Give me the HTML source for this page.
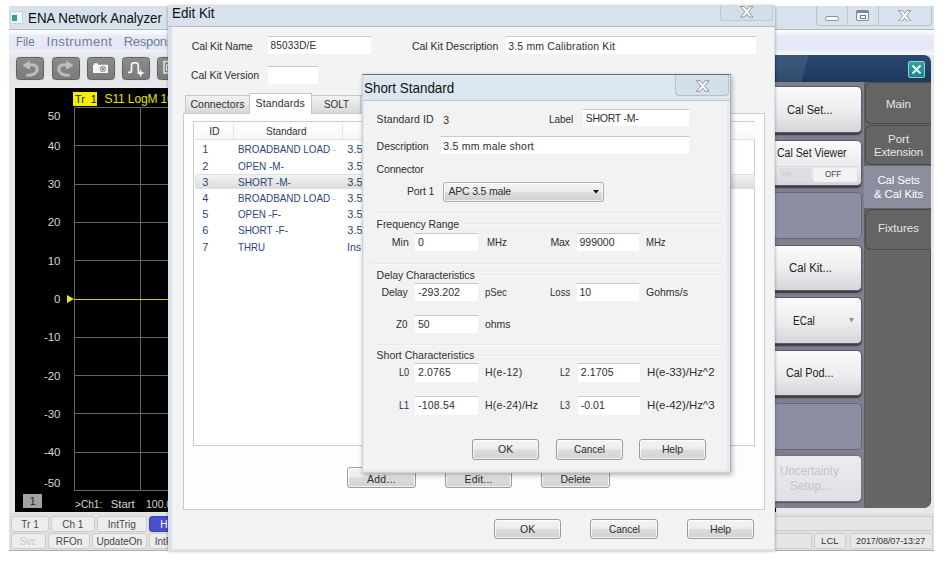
<!DOCTYPE html>
<html><head><meta charset="utf-8"><title>ENA Network Analyzer</title>
<style>
html,body{margin:0;padding:0;background:#fff;}
body{width:946px;height:561px;overflow:hidden;position:relative;font-family:"Liberation Sans",sans-serif;}
#root{position:absolute;left:0;top:0;width:946px;height:561px;overflow:hidden;background:#fff;}
#root div{position:absolute;box-sizing:border-box;}
.t{position:absolute;white-space:nowrap;font-family:"Liberation Sans",sans-serif;}
.inp{background:#fff;border:1px solid #f1f2f4;border-top-color:#c6c9ce;}
.btn{background:linear-gradient(#f4f4f4 0%,#ececec 48%,#dddddd 52%,#d2d2d2 100%);border:1px solid #9a9b9c;border-radius:3px;box-shadow:inset 0 0 0 1px rgba(255,255,255,.75);}
.sk{background:linear-gradient(#fbfbfb 0%,#ececee 55%,#d6d6da 100%);border:1px solid #5c5c66;border-radius:5px;box-shadow:0 1.500px 1.500px rgba(0,0,0,.55);}
.sk0{background:#8e8ea3;border:1px solid #666678;border-radius:5px;}
.tb{background:linear-gradient(#8b8b8b,#7b7b7b);border:1px solid #646464;border-radius:3.500px;box-shadow:0 0 1px rgba(0,0,0,.3);}
.st{background:#ededed;border:1px solid #cccccc;border-radius:3px;}
.skd{background:linear-gradient(#ececf0,#dfdfe5);border:1px solid #74747f;border-radius:5px;box-shadow:0 1px 1px rgba(0,0,0,.35);}
.vtab{background:#646464;border:1px solid #4a4a4a;border-radius:6px 0 0 6px;border-right:none;}
</style></head><body><div id="root">
<div style="left:9.3px;top:6px;width:924.7px;height:544.8px;background:#e6e8ec;"></div>
<div style="left:9.3px;top:6px;width:924.7px;height:23px;background:#d7e2ed;"></div>
<div style="left:9.3px;top:28.5px;width:924.7px;height:1px;background:#b3bac3;"></div>
<div style="left:10px;top:11px;width:13px;height:13px;background:#eef6f8;border:1px solid #c3d3d8;"></div>
<div style="left:11.5px;top:14.8px;width:5px;height:6.2px;background:#3f9a94;"></div>
<span class="t" style="left:28.4px;top:8.6px;font-size:14px;line-height:18px;color:#111;transform:scaleX(0.951);transform-origin:0 50%;">ENA Network Analyzer</span>
<div style="left:816px;top:6px;width:116px;height:20px;border:1px solid #b9c3ce;border-top:none;border-radius:0 0 4px 4px;background:#d7e2ed;"></div>
<div style="left:846.5px;top:6px;width:1px;height:20px;background:#bcc6d1;"></div>
<div style="left:878px;top:6px;width:1px;height:20px;background:#bcc6d1;"></div>
<div style="left:825px;top:16px;width:14px;height:5px;background:#fff;border:1px solid #8a93a0;border-radius:2px;"></div>
<div style="left:855.8px;top:9.5px;width:13px;height:11.5px;border:1.500px solid #7d8794;border-top-width:3px;border-radius:2px;background:#f4f7fa;"></div>
<div style="left:859.5px;top:14.5px;width:6.5px;height:4.8px;border:1.500px solid #6f7986;background:#fff;"></div>
<svg style="position:absolute;left:898px;top:9.5px" width="13.5" height="11.5" viewBox="0 0 14 12"><path d="M.500 .500h4l2.500 3.200 2.500-3.200h4l-4.500 5.500 4.500 5.500h-4l-2.500-3.200-2.500 3.200h-4l4.500-5.500z" fill="#fdfdfe" stroke="#858f9c" stroke-width="1"/></svg>
<div style="left:9.3px;top:29.5px;width:924.7px;height:25.5px;background:linear-gradient(#fcfdfe 0%,#f6f7fc 13%,#e8ebf8 22%,#e3e7f6 72%,#eceff9 82%,#f7f8fc 100%);"></div>
<span class="t" style="left:16.2px;top:32.5px;font-size:13px;line-height:17px;color:#717d94;transform:scaleX(0.888);transform-origin:0 50%;">File</span>
<span class="t" style="left:46.6px;top:32.5px;font-size:13px;line-height:17px;color:#717d94;letter-spacing:0.43px;">Instrument</span>
<span class="t" style="left:123.7px;top:32.5px;font-size:13px;line-height:17px;color:#717d94;letter-spacing:-0.28px;">Response</span>
<div style="left:9.3px;top:51.5px;width:766.7px;height:35.5px;background:linear-gradient(#ecedf2,#e4e5ea 20%,#e6e7eb);"></div>
<div class="tb" style="left:16.4px;top:56.5px;width:28.1px;height:23.7px;"></div>
<div class="tb" style="left:51.5px;top:56.5px;width:28.1px;height:23.7px;"></div>
<div class="tb" style="left:86.6px;top:56.5px;width:28.1px;height:23.7px;"></div>
<div class="tb" style="left:121.7px;top:56.5px;width:28.1px;height:23.7px;"></div>
<div class="tb" style="left:156.8px;top:56.5px;width:28.1px;height:23.7px;"></div>
<svg style="position:absolute;left:16.200px;top:57px" width="29" height="23" viewBox="0 0 29 23"><path d="M6.500 8.200L13.800 3.500v9.400z" fill="#bdbdbd"/><path d="M12.500 8.200C19 6.500 22.500 10 20.800 13.800C19.300 17 15.500 18.300 11.500 18.200" fill="none" stroke="#bdbdbd" stroke-width="3" stroke-linecap="round"/></svg>
<svg style="position:absolute;left:51.100px;top:57px" width="29" height="23" viewBox="0 0 29 23"><path d="M22.500 8.200L15.200 3.500v9.400z" fill="#bdbdbd"/><path d="M16.500 8.200C10 6.500 6.500 10 8.200 13.800C9.700 17 13.500 18.300 17.500 18.200" fill="none" stroke="#bdbdbd" stroke-width="3" stroke-linecap="round"/></svg>
<svg style="position:absolute;left:86.200px;top:57px" width="29" height="23" viewBox="0 0 29 23"><path d="M7 7.800h1.300V6.200h3.700v1.600H22v8.200H7z" fill="#f6f6f6"/><circle cx="16.900" cy="12.100" r="3" fill="#8a8a8a"/><circle cx="16.900" cy="12.100" r="1.700" fill="none" stroke="#f6f6f6" stroke-width=".8"/></svg>
<svg style="position:absolute;left:121.300px;top:57px" width="29" height="23" viewBox="0 0 29 23"><path d="M7 15.400h2.200c1.300 0 1.300-1 1.300-2.500V8.800c0-2 .700-2.900 2.200-2.900h2.400c1.500 0 2.200.900 2.200 2.900v4.100c0 1.500 0 2.500 1 2.500" fill="none" stroke="#f6f6f6" stroke-width="1.700"/><path d="M19.600 12l1.100 3 3 1.100-3 1.100-1.100 3-1.100-3-3-1.100 3-1.100z" fill="#fff"/></svg>
<svg style="position:absolute;left:156.500px;top:57px" width="29" height="23" viewBox="0 0 29 23"><rect x="7" y="4.500" width="13" height="11.500" fill="none" stroke="#e8e8e8" stroke-width="1.400"/><rect x="9.500" y="8" width="5" height="5" fill="none" stroke="#e8e8e8" stroke-width="1.200"/></svg>
<div style="left:14.5px;top:87.7px;width:761.5px;height:424.7px;background:#000;"></div>
<div style="left:74px;top:107.1px;width:702px;height:1px;background:#666666;"></div>
<div style="left:74px;top:145.37px;width:702px;height:1px;background:#666666;"></div>
<div style="left:74px;top:183.64px;width:702px;height:1px;background:#666666;"></div>
<div style="left:74px;top:221.91px;width:702px;height:1px;background:#666666;"></div>
<div style="left:74px;top:260.18px;width:702px;height:1px;background:#666666;"></div>
<div style="left:74px;top:336.72px;width:702px;height:1px;background:#666666;"></div>
<div style="left:74px;top:374.99px;width:702px;height:1px;background:#666666;"></div>
<div style="left:74px;top:413.26px;width:702px;height:1px;background:#666666;"></div>
<div style="left:74px;top:451.53px;width:702px;height:1px;background:#666666;"></div>
<div style="left:74px;top:489.8px;width:702px;height:1px;background:#666666;"></div>
<div style="left:73.5px;top:107.6px;width:1px;height:382.7px;background:#666666;"></div>
<div style="left:140px;top:107.6px;width:1px;height:382.7px;background:#666666;"></div>
<div style="left:74px;top:298.75px;width:702px;height:0.95px;background:#d8c81e;"></div>
<svg style="position:absolute;left:66.500px;top:295.0px" width="8" height="8" viewBox="0 0 8 8"><path d="M0 0L7 4L0 8z" fill="#f2e21a"/></svg>
<span class="t" style="left:47.7px;top:108.6px;font-size:11.5px;line-height:15px;color:#d6d6d6;">50</span>
<span class="t" style="left:47.7px;top:138.9px;font-size:11.5px;line-height:15px;color:#d6d6d6;">40</span>
<span class="t" style="left:47.7px;top:177.1px;font-size:11.5px;line-height:15px;color:#d6d6d6;">30</span>
<span class="t" style="left:47.7px;top:215.4px;font-size:11.5px;line-height:15px;color:#d6d6d6;">20</span>
<span class="t" style="left:47.7px;top:253.7px;font-size:11.5px;line-height:15px;color:#d6d6d6;">10</span>
<span class="t" style="left:54.1px;top:292.0px;font-size:11.5px;line-height:15px;color:#d6d6d6;">0</span>
<span class="t" style="left:43.9px;top:330.2px;font-size:11.5px;line-height:15px;color:#d6d6d6;">-10</span>
<span class="t" style="left:43.9px;top:368.5px;font-size:11.5px;line-height:15px;color:#d6d6d6;">-20</span>
<span class="t" style="left:43.9px;top:406.8px;font-size:11.5px;line-height:15px;color:#d6d6d6;">-30</span>
<span class="t" style="left:43.9px;top:445.0px;font-size:11.5px;line-height:15px;color:#d6d6d6;">-40</span>
<span class="t" style="left:43.9px;top:475.6px;font-size:11.5px;line-height:15px;color:#d6d6d6;">-50</span>
<div style="left:73px;top:92px;width:24px;height:14px;background:#f4f000;"></div>
<span class="t" style="left:74.8px;top:91.8px;font-size:11.5px;line-height:15px;color:#222;transform:scaleX(0.930);transform-origin:0 50%;">Tr</span>
<span class="t" style="left:90.5px;top:91.8px;font-size:11.5px;line-height:15px;color:#222;">1</span>
<span class="t" style="left:104.6px;top:91.3px;font-size:12px;line-height:16px;color:#e6e000;letter-spacing:-0.13px;">S11 LogM 10.00dB/</span>
<div style="left:23px;top:494px;width:19.4px;height:14px;background:#a2a2a2;"></div>
<span class="t" style="left:29.5px;top:493.8px;font-size:11.5px;line-height:15px;color:#2c2c2c;">1</span>
<span class="t" style="left:75.0px;top:496.6px;font-size:11.5px;line-height:15px;color:#d4d4d4;transform:scaleX(0.877);transform-origin:0 50%;">&gt;Ch1:</span>
<span class="t" style="left:110.7px;top:496.6px;font-size:11.5px;line-height:15px;color:#d4d4d4;letter-spacing:-0.04px;">Start</span>
<span class="t" style="left:145.6px;top:496.6px;font-size:11.5px;line-height:15px;color:#d4d4d4;transform:scaleX(0.909);transform-origin:0 50%;">100.000</span>
<div style="left:9.3px;top:512.5px;width:924.7px;height:38.3px;background:#e1e1e1;"></div>
<div class="st" style="left:11px;top:516px;width:38px;height:15.5px;"></div>
<span class="t" style="left:21.3px;top:517.5px;font-size:10px;line-height:13px;color:#484848;">Tr 1</span>
<div class="st" style="left:51px;top:516px;width:43.5px;height:15.5px;"></div>
<span class="t" style="left:62.2px;top:517.5px;font-size:10px;line-height:13px;color:#484848;">Ch 1</span>
<div class="st" style="left:97px;top:516px;width:49.5px;height:15.5px;"></div>
<span class="t" style="left:107.8px;top:517.5px;font-size:10px;line-height:13px;color:#484848;">IntTrig</span>
<div style="left:149px;top:516px;width:51px;height:15.5px;background:#4a4fd0;border:1px solid #3a3fb0;border-radius:3px;"></div>
<span class="t" style="left:160.2px;top:517.5px;font-size:10px;line-height:13px;color:#fff;">Hold</span>
<div class="st" style="left:11px;top:533px;width:34.5px;height:15.5px;"></div>
<span class="t" style="left:19.7px;top:534.5px;font-size:10px;line-height:13px;color:#c8c8c8;">Svc</span>
<div class="st" style="left:48px;top:533px;width:42px;height:15.5px;"></div>
<span class="t" style="left:55.7px;top:534.5px;font-size:10px;line-height:13px;color:#484848;">RFOn</span>
<div class="st" style="left:92px;top:533px;width:54.5px;height:15.5px;"></div>
<span class="t" style="left:96.5px;top:534.5px;font-size:10px;line-height:13px;color:#484848;">UpdateOn</span>
<div class="st" style="left:149px;top:533px;width:51px;height:15.5px;"></div>
<span class="t" style="left:154.7px;top:534.5px;font-size:10px;line-height:13px;color:#484848;">IntRef</span>
<div style="left:770px;top:55px;width:161px;height:27px;background:linear-gradient(#294770 0%,#25416b 50%,#1e3659 100%);border-radius:0 7px 0 0;"></div>
<div style="left:776px;top:55px;width:54px;height:27px;background:linear-gradient(105deg,rgba(255,255,255,.09) 0,rgba(255,255,255,.09) 31px,rgba(255,255,255,0) 32px);"></div>
<div style="left:908px;top:61px;width:17px;height:16.5px;background:linear-gradient(#2fa0a0,#1d8288);border:1px solid #8fd2d2;border-radius:2px;"></div>
<svg style="position:absolute;left:911px;top:64px" width="11" height="11" viewBox="0 0 11 11"><path d="M1.500 1.500L9.500 9.500M9.500 1.500L1.500 9.500" stroke="#e2ffff" stroke-width="2"/></svg>
<div style="left:770px;top:82px;width:96px;height:426px;background:#7f7f8d;"></div>
<div style="left:864.3px;top:82px;width:66.7px;height:426px;background:#666666;border-radius:0 0 7px 0;border-right:1.500px solid #515151;"></div>
<div style="left:863.8px;top:82px;width:1px;height:426px;background:#5c5c66;"></div>
<div class="sk" style="left:760px;top:86.3px;width:101.5px;height:47px;"></div>
<div class="sk" style="left:760px;top:139.5px;width:101.5px;height:46.7px;"></div>
<div class="sk0" style="left:760px;top:192.3px;width:101.5px;height:46.5px;"></div>
<div class="sk" style="left:760px;top:244.8px;width:101.5px;height:46.7px;"></div>
<div class="sk" style="left:760px;top:297.3px;width:101.5px;height:46.7px;"></div>
<div class="sk" style="left:760px;top:349.8px;width:101.5px;height:46.2px;"></div>
<div class="sk0" style="left:760px;top:402.5px;width:101.5px;height:47.5px;"></div>
<div class="skd" style="left:760px;top:454.8px;width:101.5px;height:47.4px;"></div>
<span class="t" style="left:786.5px;top:102.0px;font-size:12.5px;line-height:16px;color:#222;transform:scaleX(0.885);transform-origin:0 50%;">Cal Set...</span>
<span class="t" style="left:776.5px;top:144.5px;font-size:12.5px;line-height:16px;color:#222;transform:scaleX(0.843);transform-origin:0 50%;">Cal Set Viewer</span>
<div style="left:762px;top:165.5px;width:99px;height:1px;background:#dcdce0;"></div>
<div style="left:778.5px;top:168px;width:32.5px;height:13.5px;background:#dedee2;border-radius:2px;"></div>
<div style="left:812.5px;top:168px;width:44.5px;height:13.5px;background:#f3f3f5;border-radius:2px;"></div>
<span class="t" style="left:782.0px;top:168.7px;font-size:8px;line-height:10px;color:#c6c6c6;">on</span>
<span class="t" style="left:824.7px;top:167.7px;font-size:9px;line-height:12px;color:#444;transform:scaleX(0.906);transform-origin:0 50%;">OFF</span>
<span class="t" style="left:788.5px;top:259.5px;font-size:12.5px;line-height:16px;color:#222;transform:scaleX(0.910);transform-origin:0 50%;">Cal Kit...</span>
<span class="t" style="left:793.0px;top:312.5px;font-size:12.5px;line-height:16px;color:#222;transform:scaleX(0.801);transform-origin:0 50%;">ECal</span>
<svg style="position:absolute;left:849.200px;top:318px" width="5" height="4.500" viewBox="0 0 7 6"><path d="M0 0h7L3.500 6z" fill="#8e8e96"/></svg>
<span class="t" style="left:786.0px;top:365.0px;font-size:12.5px;line-height:16px;color:#222;transform:scaleX(0.865);transform-origin:0 50%;">Cal Pod...</span>
<span class="t" style="left:780.4px;top:463.0px;font-size:12.5px;line-height:16px;color:#c4c4ca;transform:scaleX(0.929);transform-origin:0 50%;">Uncertainty</span>
<span class="t" style="left:789.7px;top:477.7px;font-size:12.5px;line-height:16px;color:#c4c4ca;transform:scaleX(0.952);transform-origin:0 50%;">Setup...</span>
<div class="vtab" style="left:864.8px;top:82px;width:66.2px;height:42px;"></div>
<div class="vtab" style="left:864.8px;top:124.5px;width:66.2px;height:40.5px;"></div>
<div style="left:863.8px;top:165.5px;width:67.2px;height:42.5px;background:#8d8da0;"></div>
<div class="vtab" style="left:864.8px;top:208.5px;width:66.2px;height:41px;"></div>
<span class="t" style="left:886.0px;top:97.0px;font-size:11.5px;line-height:15px;color:#e4e4e4;">Main</span>
<span class="t" style="left:888.0px;top:132.0px;font-size:11.5px;line-height:15px;color:#e4e4e4;">Port</span>
<span class="t" style="left:874.0px;top:145.0px;font-size:11.5px;line-height:15px;color:#e4e4e4;letter-spacing:-0.17px;">Extension</span>
<span class="t" style="left:877.5px;top:173.2px;font-size:11.5px;line-height:15px;color:#fff;letter-spacing:-0.18px;">Cal Sets</span>
<span class="t" style="left:874.0px;top:186.7px;font-size:11.5px;line-height:15px;color:#fff;letter-spacing:-0.15px;">&amp; Cal Kits</span>
<span class="t" style="left:878.0px;top:221.2px;font-size:11.5px;line-height:15px;color:#e4e4e4;letter-spacing:0.01px;">Fixtures</span>
<div style="left:931px;top:55px;width:3px;height:457px;background:#e6e8ec;"></div>
<div style="left:770px;top:515.5px;width:162.5px;height:15px;background:#e6e6e6;border:1px solid #cdcdcd;"></div>
<div style="left:770px;top:532.5px;width:41.5px;height:16px;background:#e6e6e6;border:1px solid #cdcdcd;"></div>
<div style="left:813.5px;top:532.5px;width:32.5px;height:16px;background:#e9e9e9;border:1px solid #cdcdcd;border-radius:3px;"></div>
<span class="t" style="left:821.1px;top:535.0px;font-size:9.5px;line-height:12px;color:#333;">LCL</span>
<div style="left:849.5px;top:532.5px;width:83px;height:16px;background:#e9e9e9;border:1px solid #cdcdcd;border-radius:3px;"></div>
<span class="t" style="left:856.1px;top:535.0px;font-size:9px;line-height:12px;color:#333;letter-spacing:-0.10px;">2017/08/07-13:27</span>
<div style="left:9.3px;top:549.8px;width:924.7px;height:1px;background:#a9adb3;"></div>
<div style="left:168px;top:6px;width:607px;height:544.5px;background:#d7e2ec;box-shadow:0 0 3px rgba(0,0,0,.35);"></div>
<div style="left:168px;top:25.7px;width:607px;height:1px;background:#b4bcc6;"></div>
<div style="left:172.2px;top:26.7px;width:602.1px;height:522.6px;background:#f3f3f4;"></div>
<span class="t" style="left:171.8px;top:4.1px;font-size:14.5px;line-height:19px;color:#111;transform:scaleX(0.927);transform-origin:0 50%;">Edit Kit</span>
<div style="left:719.5px;top:6px;width:53px;height:15px;background:#d2deea;border:1px solid #bcc8d3;border-top:none;border-radius:0 0 3px 3px;"></div>
<svg style="position:absolute;left:740.4px;top:6.3px" width="13.5" height="11.5" viewBox="0 0 14 12"><path d="M.500 .500h4l2.500 3.200 2.500-3.200h4l-4.500 5.500 4.500 5.500h-4l-2.500-3.200-2.500 3.200h-4l4.500-5.500z" fill="#fdfdfe" stroke="#858f9c" stroke-width="1"/></svg>
<span class="t" style="left:191.7px;top:38.7px;font-size:10.5px;line-height:14px;color:#2e2e2e;letter-spacing:-0.08px;">Cal Kit Name</span>
<div class="inp" style="left:266.5px;top:36.2px;width:105.8px;height:18.9px;"></div>
<span class="t" style="left:270.4px;top:39.2px;font-size:10px;line-height:13px;color:#2e2e2e;letter-spacing:0.20px;">85033D/E</span>
<span class="t" style="left:411.9px;top:38.7px;font-size:10.5px;line-height:14px;color:#2e2e2e;letter-spacing:-0.00px;">Cal Kit Description</span>
<div class="inp" style="left:504.5px;top:36.2px;width:252.3px;height:18.9px;"></div>
<span class="t" style="left:508.3px;top:38.7px;font-size:10.5px;line-height:14px;color:#2e2e2e;letter-spacing:0.16px;">3.5 mm Calibration Kit</span>
<span class="t" style="left:191.0px;top:68.4px;font-size:10.5px;line-height:14px;color:#2e2e2e;letter-spacing:-0.06px;">Cal Kit Version</span>
<div class="inp" style="left:266.5px;top:65.6px;width:52.3px;height:19.8px;"></div>
<div style="left:182.6px;top:112.5px;width:582.4px;height:397.5px;background:#fdfdfd;border:1px solid #c9ccd1;"></div>
<div style="left:184.5px;top:95px;width:65px;height:18px;background:linear-gradient(#f2f2f2,#e4e4e4 55%,#d8d8d8);border:1px solid #c3c6cb;border-bottom:none;"></div>
<span class="t" style="left:190.5px;top:97.0px;font-size:10.5px;line-height:14px;color:#2e2e2e;letter-spacing:0.03px;">Connectors</span>
<div style="left:311px;top:95px;width:49.5px;height:18px;background:linear-gradient(#f2f2f2,#e4e4e4 55%,#d8d8d8);border:1px solid #c3c6cb;border-bottom:none;"></div>
<span class="t" style="left:324.0px;top:97.0px;font-size:10.5px;line-height:14px;color:#2e2e2e;transform:scaleX(0.938);transform-origin:0 50%;">SOLT</span>
<div style="left:360px;top:95px;width:50px;height:18px;background:linear-gradient(#f2f2f2,#e4e4e4 55%,#d8d8d8);border:1px solid #c3c6cb;border-bottom:none;"></div>
<div style="left:249px;top:93px;width:63px;height:21px;background:#fff;border:1px solid #c3c6cb;border-bottom:none;"></div>
<span class="t" style="left:255.5px;top:96.0px;font-size:10.5px;line-height:14px;color:#2e2e2e;letter-spacing:0.18px;">Standards</span>
<div style="left:193.3px;top:121.3px;width:562.2px;height:324.7px;background:#fff;border:1px solid #c9cdd2;"></div>
<div style="left:195px;top:122.3px;width:559.5px;height:18px;background:linear-gradient(#ffffff,#f7f8fa);border-bottom:1px solid #dfe3e8;"></div>
<div style="left:232.5px;top:122.3px;width:1px;height:17.7px;background:#e3e6ea;"></div>
<div style="left:341.5px;top:122.3px;width:1px;height:17.7px;background:#e3e6ea;"></div>
<span class="t" style="left:209.2px;top:124.0px;font-size:10.5px;line-height:14px;color:#333;">ID</span>
<span class="t" style="left:266.4px;top:124.0px;font-size:10.5px;line-height:14px;color:#333;transform:scaleX(0.950);transform-origin:0 50%;">Standard</span>
<span class="t" style="left:202.3px;top:142.4px;font-size:11px;line-height:14px;color:#2b4779;">1</span>
<span class="t" style="left:238.4px;top:142.4px;font-size:11px;line-height:14px;color:#2b4779;transform:scaleX(0.898);transform-origin:0 50%;">BROADBAND LOAD</span>
<span class="t" style="left:332.3px;top:142.4px;font-size:11px;line-height:14px;color:#b4bfd2;">-</span>
<span class="t" style="left:347.3px;top:142.4px;font-size:11px;line-height:14px;color:#2b4779;letter-spacing:0.07px;">3.5</span>
<span class="t" style="left:202.3px;top:158.6px;font-size:11px;line-height:14px;color:#2b4779;">2</span>
<span class="t" style="left:238.4px;top:158.6px;font-size:11px;line-height:14px;color:#2b4779;transform:scaleX(0.907);transform-origin:0 50%;">OPEN -M-</span>
<span class="t" style="left:347.3px;top:158.6px;font-size:11px;line-height:14px;color:#2b4779;letter-spacing:0.07px;">3.5</span>
<div style="left:194.5px;top:173.7px;width:560px;height:15.3px;background:linear-gradient(#f2f2f2,#dddddd);border:1px solid #e0e0e0;border-radius:2px;"></div>
<span class="t" style="left:202.3px;top:174.8px;font-size:11px;line-height:14px;color:#2b4779;">3</span>
<span class="t" style="left:238.4px;top:174.8px;font-size:11px;line-height:14px;color:#2b4779;transform:scaleX(0.919);transform-origin:0 50%;">SHORT -M-</span>
<span class="t" style="left:347.3px;top:174.8px;font-size:11px;line-height:14px;color:#2b4779;letter-spacing:0.07px;">3.5</span>
<span class="t" style="left:202.3px;top:191.0px;font-size:11px;line-height:14px;color:#2b4779;">4</span>
<span class="t" style="left:238.4px;top:191.0px;font-size:11px;line-height:14px;color:#2b4779;transform:scaleX(0.898);transform-origin:0 50%;">BROADBAND LOAD</span>
<span class="t" style="left:332.3px;top:191.0px;font-size:11px;line-height:14px;color:#b4bfd2;">-</span>
<span class="t" style="left:347.3px;top:191.0px;font-size:11px;line-height:14px;color:#2b4779;letter-spacing:0.07px;">3.5</span>
<span class="t" style="left:202.3px;top:207.2px;font-size:11px;line-height:14px;color:#2b4779;">5</span>
<span class="t" style="left:238.4px;top:207.2px;font-size:11px;line-height:14px;color:#2b4779;transform:scaleX(0.891);transform-origin:0 50%;">OPEN -F-</span>
<span class="t" style="left:347.3px;top:207.2px;font-size:11px;line-height:14px;color:#2b4779;letter-spacing:0.07px;">3.5</span>
<span class="t" style="left:202.3px;top:223.4px;font-size:11px;line-height:14px;color:#2b4779;">6</span>
<span class="t" style="left:238.4px;top:223.4px;font-size:11px;line-height:14px;color:#2b4779;transform:scaleX(0.906);transform-origin:0 50%;">SHORT -F-</span>
<span class="t" style="left:347.3px;top:223.4px;font-size:11px;line-height:14px;color:#2b4779;letter-spacing:0.07px;">3.5</span>
<span class="t" style="left:202.3px;top:239.6px;font-size:11px;line-height:14px;color:#2b4779;">7</span>
<span class="t" style="left:238.4px;top:239.6px;font-size:11px;line-height:14px;color:#2b4779;transform:scaleX(0.884);transform-origin:0 50%;">THRU</span>
<span class="t" style="left:347.3px;top:239.6px;font-size:11px;line-height:14px;color:#2b4779;transform:scaleX(0.954);transform-origin:0 50%;">Ins</span>
<div class="btn" style="left:347px;top:467.4px;width:69px;height:20.4px;"></div>
<span class="t" style="left:367.0px;top:471.6px;font-size:10.5px;line-height:14px;color:#2e2e2e;letter-spacing:0.26px;">Add...</span>
<div class="btn" style="left:444.8px;top:467.4px;width:67.6px;height:20.4px;"></div>
<span class="t" style="left:464.6px;top:471.6px;font-size:10.5px;line-height:14px;color:#2e2e2e;letter-spacing:0.16px;">Edit...</span>
<div class="btn" style="left:541.2px;top:467.4px;width:68.8px;height:20.4px;"></div>
<span class="t" style="left:560.6px;top:471.6px;font-size:10.5px;line-height:14px;color:#2e2e2e;letter-spacing:-0.06px;">Delete</span>
<div class="btn" style="left:493.8px;top:519px;width:67.7px;height:20.2px;"></div>
<span class="t" style="left:520.1px;top:522.0px;font-size:10.5px;line-height:14px;color:#2e2e2e;letter-spacing:-0.09px;">OK</span>
<div class="btn" style="left:590.2px;top:519px;width:67.8px;height:20.2px;"></div>
<span class="t" style="left:608.6px;top:522.0px;font-size:10.5px;line-height:14px;color:#2e2e2e;transform:scaleX(0.948);transform-origin:0 50%;">Cancel</span>
<div class="btn" style="left:686.7px;top:519px;width:67.6px;height:20.2px;"></div>
<span class="t" style="left:710.0px;top:522.0px;font-size:10.5px;line-height:14px;color:#2e2e2e;letter-spacing:-0.15px;">Help</span>
<div style="left:362px;top:74px;width:369.3px;height:399.4px;background:#e3eaf2;border:1px solid #ccd2d8;border-right-color:#a9b0b8;border-top:1.500px solid #656e78;box-shadow:1px 2px 5px rgba(0,0,0,.30);"></div>
<div style="left:363px;top:75.5px;width:367.3px;height:24.5px;background:#dce6f0;"></div>
<div style="left:363px;top:99.8px;width:367.3px;height:0.8px;background:#bcc4cd;"></div>
<div style="left:363.5px;top:100.6px;width:363.3px;height:369.8px;background:#f2f2f3;"></div>
<span class="t" style="left:363.6px;top:78.5px;font-size:14.5px;line-height:19px;color:#111;transform:scaleX(0.925);transform-origin:0 50%;">Short Standard</span>
<div style="left:674.6px;top:75.3px;width:54.4px;height:21px;background:#d3e0ec;border:1px solid #b4c0cc;border-top:none;border-radius:0 0 4px 4px;"></div>
<svg style="position:absolute;left:696px;top:79.5px" width="13.5" height="12" viewBox="0 0 14 12"><path d="M.500 .500h4l2.500 3.200 2.500-3.200h4l-4.500 5.500 4.500 5.500h-4l-2.500-3.200-2.500 3.200h-4l4.500-5.500z" fill="#fdfdfe" stroke="#858f9c" stroke-width="1"/></svg>
<span class="t" style="left:376.6px;top:112.0px;font-size:10.5px;line-height:14px;color:#2e2e2e;letter-spacing:0.10px;">Standard ID</span>
<span class="t" style="left:443.3px;top:113.0px;font-size:10.5px;line-height:14px;color:#2e2e2e;">3</span>
<span class="t" style="left:549.0px;top:112.0px;font-size:10.5px;line-height:14px;color:#2e2e2e;transform:scaleX(0.946);transform-origin:0 50%;">Label</span>
<div class="inp" style="left:582px;top:108.6px;width:107.9px;height:18.4px;"></div>
<span class="t" style="left:585.7px;top:110.5px;font-size:10.5px;line-height:14px;color:#2e2e2e;letter-spacing:-0.25px;">SHORT -M-</span>
<span class="t" style="left:376.6px;top:138.7px;font-size:10.5px;line-height:14px;color:#2e2e2e;letter-spacing:-0.05px;">Description</span>
<div class="inp" style="left:440px;top:136.4px;width:249.9px;height:18.6px;"></div>
<span class="t" style="left:443.3px;top:138.5px;font-size:10.5px;line-height:14px;color:#2e2e2e;letter-spacing:0.22px;">3.5 mm male short</span>
<span class="t" style="left:376.6px;top:162.0px;font-size:10.5px;line-height:14px;color:#2e2e2e;letter-spacing:-0.17px;">Connector</span>
<span class="t" style="left:407.0px;top:183.6px;font-size:10.5px;line-height:14px;color:#2e2e2e;letter-spacing:-0.14px;">Port 1</span>
<div style="left:443.3px;top:181.7px;width:161px;height:19.9px;background:linear-gradient(#f3f3f3 0%,#ebebeb 50%,#dddddd 52%,#d0d0d0 100%);border:1px solid #adaeaf;border-radius:3px;box-shadow:inset 0 0 0 1px rgba(255,255,255,.7);"></div>
<span class="t" style="left:448.4px;top:184.0px;font-size:10.5px;line-height:14px;color:#2e2e2e;letter-spacing:-0.18px;">APC 3.5 male</span>
<svg style="position:absolute;left:592.500px;top:190px" width="6" height="3.500" viewBox="0 0 7 4"><path d="M0 0h7L3.500 4z" fill="#111"/></svg>
<div style="left:371px;top:212.3px;width:351px;height:1px;background:#e8e8e9;"></div>
<div style="left:371px;top:213.3px;width:351px;height:1px;background:#f8f8f9;"></div>
<span class="t" style="left:376.6px;top:216.5px;font-size:10.5px;line-height:14px;color:#2e2e2e;letter-spacing:-0.07px;">Frequency Range</span>
<div style="left:463px;top:222.5px;width:259px;height:1px;background:#e8e8e9;"></div>
<div style="left:463px;top:223.5px;width:259px;height:1px;background:#f8f8f9;"></div>
<div style="left:371px;top:263px;width:351px;height:1px;background:#e8e8e9;"></div>
<div style="left:371px;top:264px;width:351px;height:1px;background:#f8f8f9;"></div>
<span class="t" style="left:376.6px;top:267.7px;font-size:10.5px;line-height:14px;color:#2e2e2e;letter-spacing:-0.05px;">Delay Characteristics</span>
<div style="left:479px;top:274.2px;width:243px;height:1px;background:#e8e8e9;"></div>
<div style="left:479px;top:275.2px;width:243px;height:1px;background:#f8f8f9;"></div>
<div style="left:371px;top:344px;width:351px;height:1px;background:#e8e8e9;"></div>
<div style="left:371px;top:345px;width:351px;height:1px;background:#f8f8f9;"></div>
<span class="t" style="left:376.6px;top:348.4px;font-size:10.5px;line-height:14px;color:#2e2e2e;letter-spacing:0.01px;">Short Characteristics</span>
<div style="left:479px;top:355px;width:243px;height:1px;background:#e8e8e9;"></div>
<div style="left:479px;top:356px;width:243px;height:1px;background:#f8f8f9;"></div>
<span class="t" style="left:391.8px;top:234.5px;font-size:10.5px;line-height:14px;color:#2e2e2e;letter-spacing:0.03px;">Min</span>
<div class="inp" style="left:414px;top:232.9px;width:65px;height:19.2px;"></div>
<span class="t" style="left:418.0px;top:234.5px;font-size:10.5px;line-height:14px;color:#2e2e2e;letter-spacing:0.16px;">0</span>
<span class="t" style="left:487.0px;top:234.5px;font-size:10.5px;line-height:14px;color:#2e2e2e;transform:scaleX(0.918);transform-origin:0 50%;">MHz</span>
<span class="t" style="left:550.4px;top:234.5px;font-size:10.5px;line-height:14px;color:#2e2e2e;letter-spacing:-0.25px;">Max</span>
<div class="inp" style="left:575.5px;top:232.9px;width:64.5px;height:19.2px;"></div>
<span class="t" style="left:579.5px;top:234.5px;font-size:10.5px;line-height:14px;color:#2e2e2e;letter-spacing:-0.01px;">999000</span>
<span class="t" style="left:646.0px;top:234.5px;font-size:10.5px;line-height:14px;color:#2e2e2e;transform:scaleX(0.908);transform-origin:0 50%;">MHz</span>
<span class="t" style="left:381.6px;top:284.5px;font-size:10.5px;line-height:14px;color:#2e2e2e;letter-spacing:-0.19px;">Delay</span>
<div class="inp" style="left:414px;top:282.9px;width:65px;height:19.2px;"></div>
<span class="t" style="left:418.0px;top:284.5px;font-size:10.5px;line-height:14px;color:#2e2e2e;letter-spacing:0.07px;">-293.202</span>
<span class="t" style="left:485.0px;top:284.5px;font-size:10.5px;line-height:14px;color:#2e2e2e;transform:scaleX(0.911);transform-origin:0 50%;">pSec</span>
<span class="t" style="left:550.0px;top:284.5px;font-size:10.5px;line-height:14px;color:#2e2e2e;transform:scaleX(0.911);transform-origin:0 50%;">Loss</span>
<div class="inp" style="left:575.5px;top:282.9px;width:64.5px;height:19.2px;"></div>
<span class="t" style="left:579.5px;top:284.5px;font-size:10.5px;line-height:14px;color:#2e2e2e;letter-spacing:-0.09px;">10</span>
<span class="t" style="left:646.0px;top:284.5px;font-size:10.5px;line-height:14px;color:#2e2e2e;letter-spacing:-0.00px;">Gohms/s</span>
<span class="t" style="left:396.0px;top:316.5px;font-size:10.5px;line-height:14px;color:#2e2e2e;transform:scaleX(0.938);transform-origin:0 50%;">Z0</span>
<div class="inp" style="left:414px;top:314.9px;width:65px;height:19.2px;"></div>
<span class="t" style="left:418.0px;top:316.5px;font-size:10.5px;line-height:14px;color:#2e2e2e;letter-spacing:-0.09px;">50</span>
<span class="t" style="left:485.0px;top:316.5px;font-size:10.5px;line-height:14px;color:#2e2e2e;letter-spacing:-0.09px;">ohms</span>
<span class="t" style="left:398.6px;top:365.0px;font-size:10.5px;line-height:14px;color:#2e2e2e;transform:scaleX(0.873);transform-origin:0 50%;">L0</span>
<div class="inp" style="left:414px;top:363.4px;width:65px;height:19.2px;"></div>
<span class="t" style="left:418.0px;top:365.0px;font-size:10.5px;line-height:14px;color:#2e2e2e;letter-spacing:0.15px;">2.0765</span>
<span class="t" style="left:485.0px;top:365.0px;font-size:10.5px;line-height:14px;color:#2e2e2e;letter-spacing:0.27px;">H(e-12)</span>
<span class="t" style="left:560.0px;top:365.0px;font-size:10.5px;line-height:14px;color:#2e2e2e;transform:scaleX(0.856);transform-origin:0 50%;">L2</span>
<div class="inp" style="left:576.8px;top:363.4px;width:64.7px;height:19.2px;"></div>
<span class="t" style="left:580.8px;top:365.0px;font-size:10.5px;line-height:14px;color:#2e2e2e;letter-spacing:0.15px;">2.1705</span>
<span class="t" style="left:647.0px;top:365.0px;font-size:10.5px;line-height:14px;color:#2e2e2e;transform:scaleX(1.088);transform-origin:0 50%;">H(e-33)/Hz^2</span>
<span class="t" style="left:398.6px;top:398.0px;font-size:10.5px;line-height:14px;color:#2e2e2e;transform:scaleX(0.873);transform-origin:0 50%;">L1</span>
<div class="inp" style="left:414px;top:396.4px;width:65px;height:19.2px;"></div>
<span class="t" style="left:418.0px;top:398.0px;font-size:10.5px;line-height:14px;color:#2e2e2e;letter-spacing:0.20px;">-108.54</span>
<span class="t" style="left:485.0px;top:398.0px;font-size:10.5px;line-height:14px;color:#2e2e2e;letter-spacing:0.19px;">H(e-24)/Hz</span>
<span class="t" style="left:560.0px;top:398.0px;font-size:10.5px;line-height:14px;color:#2e2e2e;transform:scaleX(0.856);transform-origin:0 50%;">L3</span>
<div class="inp" style="left:576.8px;top:396.4px;width:64.7px;height:19.2px;"></div>
<span class="t" style="left:580.8px;top:398.0px;font-size:10.5px;line-height:14px;color:#2e2e2e;letter-spacing:0.01px;">-0.01</span>
<span class="t" style="left:647.0px;top:398.0px;font-size:10.5px;line-height:14px;color:#2e2e2e;transform:scaleX(1.088);transform-origin:0 50%;">H(e-42)/Hz^3</span>
<div class="btn" style="left:471.7px;top:438.6px;width:67.8px;height:21.4px;"></div>
<span class="t" style="left:498.1px;top:442.3px;font-size:10.5px;line-height:14px;color:#2e2e2e;letter-spacing:-0.09px;">OK</span>
<div class="btn" style="left:555.7px;top:438.6px;width:67.3px;height:21.4px;"></div>
<span class="t" style="left:573.9px;top:442.3px;font-size:10.5px;line-height:14px;color:#2e2e2e;transform:scaleX(0.948);transform-origin:0 50%;">Cancel</span>
<div class="btn" style="left:638.5px;top:438.6px;width:67.7px;height:21.4px;"></div>
<span class="t" style="left:661.9px;top:442.3px;font-size:10.5px;line-height:14px;color:#2e2e2e;letter-spacing:-0.15px;">Help</span>
</div></body></html>
